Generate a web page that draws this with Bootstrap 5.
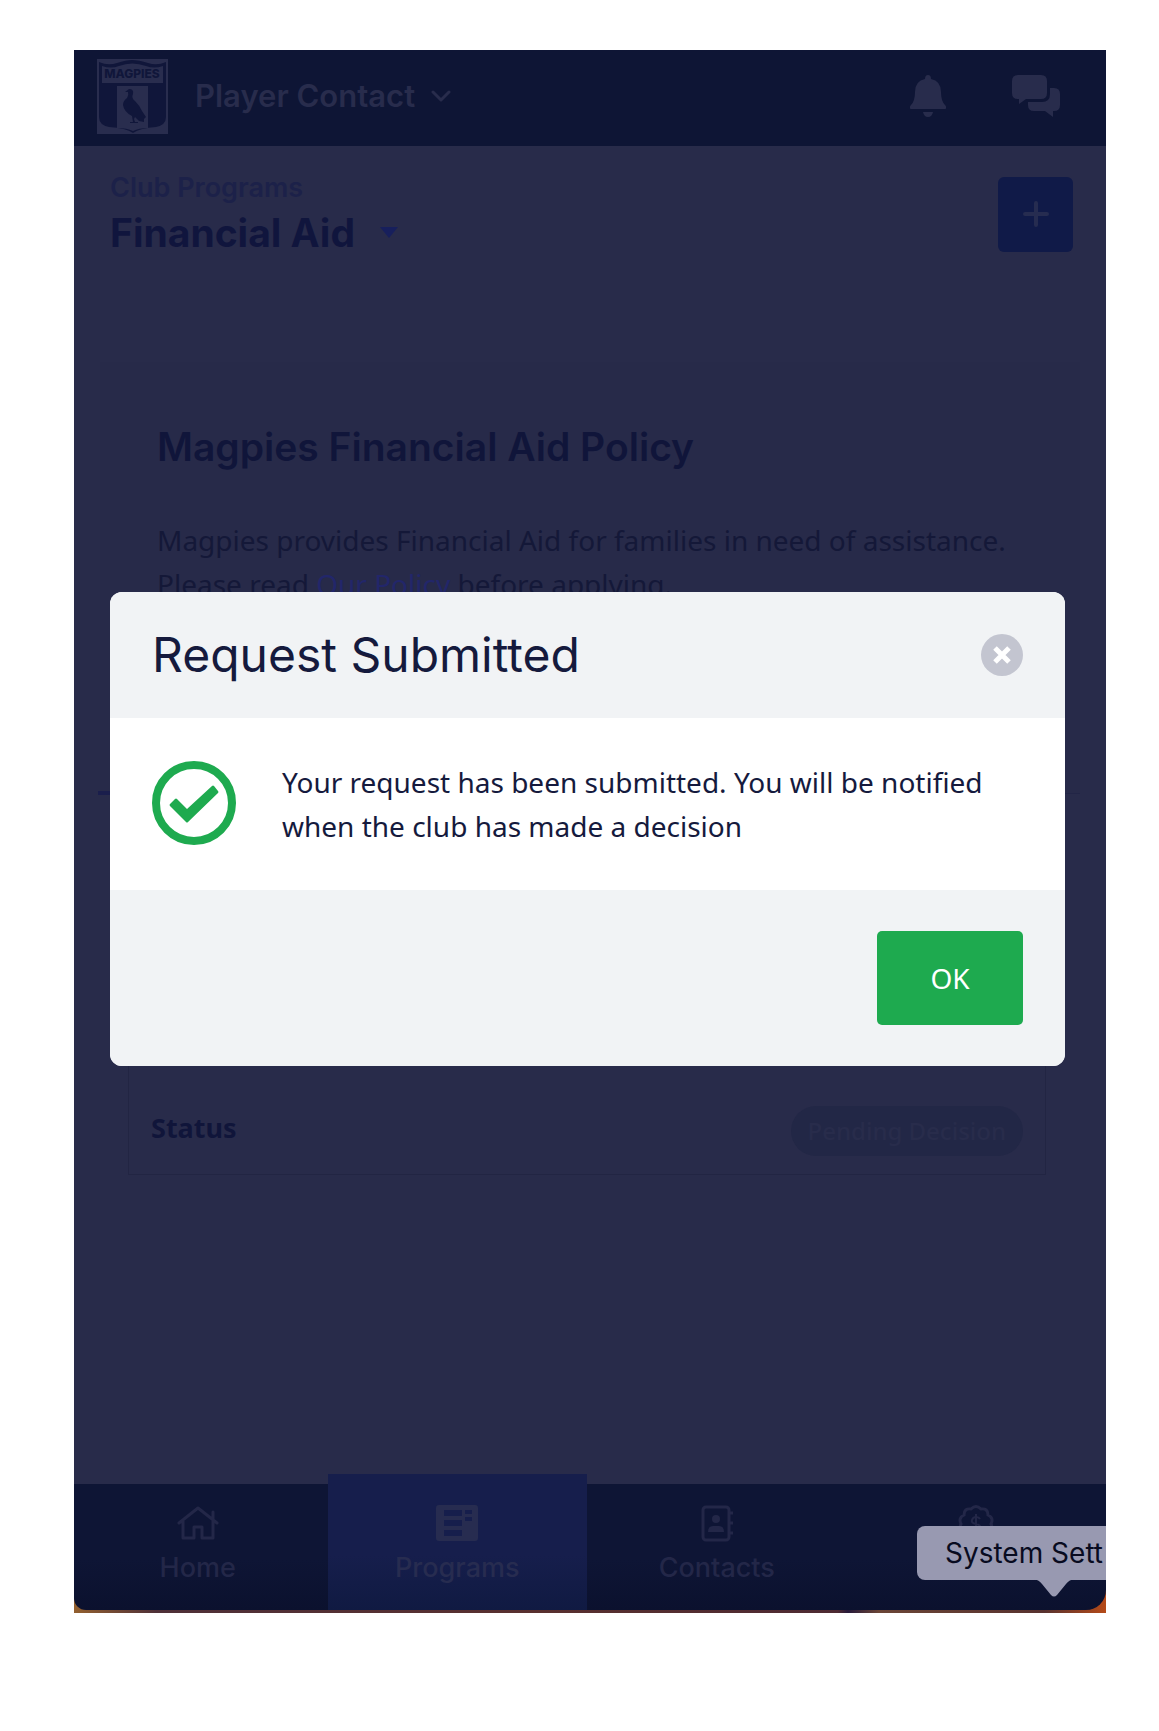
<!DOCTYPE html>
<html lang="en">
<head>
<meta charset="utf-8">
<meta name="viewport" content="width=device-width, initial-scale=1">
<title>Financial Aid</title>
<link href="https://cdn.jsdelivr.net/npm/bootstrap@5.3.0/dist/css/bootstrap.min.css" rel="stylesheet">
<style>
  body { background: #fff; font-family: "Noto Sans", sans-serif; font-size: 28px; line-height: 44px; color: #10153a; }
  .page-wrap { padding: 50px 53px 118px 74px; }
  .app-frame { min-height: calc(100vh - 168px); background: #282b4a; }
  .head-font { font-family: Inter, sans-serif; }
  .top-bar { height: 96px; background: #0e1535; padding: 0 46px 4px 23px; color: #282c4c; }
  .club-menu { font-size: 31px; font-weight: 600; color: #282c4c; margin-left: 27px; }
  .chat-btn { margin-left: 66px; }
  .sub-head { padding: 23px 33px 24px 36px; }
  .crumb { font-size: 27px; line-height: 38px; font-weight: 600; color: #1c2149; }
  .page-title { font-size: 39px; line-height: 52px; font-weight: 700; color: #10153d; }
  .add-btn { width: 75px; height: 75px; background: #101a48; border-radius: 6px; }
  .policy { margin: 79px 26px 0; padding: 59px 50px 0 57px; background: #272a49; min-height: 432px; border-bottom: 1px solid #222546; }
  .policy h2 { font-size: 39px; line-height: 52px; font-weight: 600; color: #10153a; margin-bottom: 45px; }
  .policy p { color: #141838; }
  .policy a { color: #22266a; }
  .tab-mark { width: 240px; height: 4px; background: #1a1e4c; margin-left: 24px; margin-top: -3px; }
  .request-box { margin: 120px 60px 0 54px; min-height: 260px; padding: 0 22px 18px; border: 1px solid #222543; }
  .request-box strong { font-size: 27px; line-height: 56px; }
  .status-pill { background: #222746; color: #282c4b; font-weight: 500; font-size: 24px; line-height: 50px; border-radius: 25px; padding: 0 17px; }
  .foot-wrap { background: linear-gradient(90deg, #93602f 0, #4f3038 8%, #59302f 45%, #4e2a32 74%, #27193a 75%, #6b4536 78%, #58322f 94%, #b54a18 100%); padding-bottom: 3px; }
  .foot-nav { background: linear-gradient(#0e1535 60%, #0b112e); border-bottom-left-radius: 12px; border-bottom-right-radius: 20px; }
  .foot-tabs { margin-left: -6px; }
  .foot-tab { height: 126px; padding-top: 20px; font-size: 27px; line-height: 32px; font-weight: 500; color: #232748; text-decoration: none; }
  .foot-tab svg { height: 38px; margin-bottom: 10px; }
  .foot-tab.active { margin-top: -10px; height: 136px; padding-top: 30px; background: linear-gradient(#161e4c 60%, #101a42); color: #272c50; }
  .dialog-box { position: absolute; top: 542px; left: 36px; right: 41px; border-radius: 12px; background: #fff; overflow: hidden; }
  .dialog-head { background: #f1f3f5; padding: 37px 42px; }
  .dialog-head h1 { font-size: 48px; line-height: 52px; font-weight: 400; color: #151a3d; }
  .dialog-main { padding: 42px; gap: 45px; color: #151a3d; }
  .dialog-foot { background: #f1f3f5; padding: 41px 42px; }
  .ok-btn { width: 146px; height: 94px; background: #1eaa4f; color: #fff; font-size: 28px; border-radius: 5px; }
  .dock-tip { position: absolute; left: 843px; right: 0; bottom: 33px; height: 54px; background: #9899b1; color: #080b20; border-radius: 8px 0 0 8px; padding-left: 28px; font-family: Inter, sans-serif; font-size: 28px; line-height: 54px; white-space: nowrap; }
  .dock-tip svg { position: absolute; left: 115px; top: 53px; }
</style>
<script src="https://cdn.jsdelivr.net/npm/bootstrap@5.3.0/dist/js/bootstrap.bundle.min.js"></script>
</head>
<body>
<div class="page-wrap">
<div class="app-frame position-relative d-flex flex-column overflow-hidden">
  <header class="top-bar d-flex align-items-center">
    <svg width="71" height="75" viewBox="0 0 71 75" role="img" aria-label="Magpies crest">
      <path fill="#292d4e" d="M0 0h71v75H0z"/>
      <path fill="#10163a" d="M2 3q9 4 18 1Q29 1 35 1q7 0 16 3 9 3 18-1v55q0 8-10 10-16 1-23 6-7-5-24-6Q2 66 2 58z"/>
      <path fill="#292d4e" d="M5 7q9 3 17 0 13-5 27 0 8 3 17 0v17H5zM20 27h31v42q-9 0-15 3-6-3-16-3z"/>
      <text x="35" y="19" text-anchor="middle" font-family="Inter, sans-serif" font-size="12" font-weight="800" fill="#10163a">MAGPIES</text>
      <path fill="#10163a" d="M28 33l4-3q5 0 4 5-2 4 2 7 5 5 7 10l4 6-2 2 0 3-5-1-4-4-1 2 1 3h3v1h-8v-1h3l-1-6q-8-4-9-11 0-4 4-7 2-3 1-6z"/>
    </svg>
    <button type="button" class="btn club-menu head-font border-0 p-0 d-flex align-items-center gap-3">Player Contact
      <svg width="20" height="12" viewBox="0 0 20 12" fill="none" stroke="currentColor" stroke-width="3" stroke-linecap="round" stroke-linejoin="round"><path d="M2 2l8 8 8-8"/></svg>
    </button>
    <button type="button" class="btn border-0 p-0 ms-auto lh-1" aria-label="Notifications">
      <svg width="36" height="42" viewBox="0 0 36 42" fill="#282c4c"><path d="M18 0q3 0 3 4 10 2 10 13 0 9 4 13 3 4-1 4H2q-4 0-1-4 4-4 4-13Q5 6 15 4q0-4 3-4zM13 37h10q-1 5-5 5t-5-5z"/></svg>
    </button>
    <button type="button" class="btn chat-btn border-0 p-0 lh-1" aria-label="Messages">
      <svg width="48" height="42" viewBox="0 0 48 42" fill="#282c4c"><path d="M6 0h23q6 0 6 6v12q0 6-6 6H14l-7 5v-5H6q-6 0-6-6V6q0-6 6-6zM38 13h4q6 0 6 6v11q0 6-6 6h-1v6l-8-6H22q-6 0-6-6v-3h14q8 0 8-8z"/></svg>
    </button>
  </header>
  <div class="sub-head head-font d-flex justify-content-between align-items-center">
    <div>
      <a href="#" class="crumb d-block text-decoration-none">Club Programs</a>
      <button type="button" class="btn page-title border-0 p-0 d-flex align-items-center gap-4">Financial Aid
        <svg width="20" height="12" viewBox="0 0 20 12" fill="#171f5c"><path d="M1 0h18L10 11z"/></svg>
      </button>
    </div>
    <button type="button" class="btn add-btn border-0 p-0 d-flex align-items-center justify-content-center" aria-label="Add">
      <svg width="26" height="26" viewBox="0 0 26 26" stroke="#262c50" stroke-width="4" stroke-linecap="round"><path d="M13 2v22M2 13h22"/></svg>
    </button>
  </div>
  <section class="policy">
    <h2 class="head-font">Magpies Financial Aid Policy</h2>
    <p class="mb-0">Magpies provides Financial Aid for families in need of assistance.<br>Please read <a href="#" class="text-decoration-none">Our Policy</a> before applying.</p>
  </section>
  <div class="tab-mark"></div>
  <div class="request-box d-flex justify-content-between align-items-end">
    <strong>Status</strong>
    <span class="status-pill">Pending Decision</span>
  </div>
  <div class="foot-wrap mt-auto">
    <nav class="foot-nav">
      <div class="foot-tabs head-font d-flex">
        <a href="#" class="foot-tab col-3 d-flex flex-column align-items-center">
          <svg width="42" viewBox="0 0 42 38" fill="none" stroke="currentColor" stroke-width="3" stroke-linejoin="round" stroke-linecap="round"><path d="M2 19L21 4l19 15M6 17v17h11V23h8v11h11V17M36 15V8"/></svg>Home</a>
        <a href="#" class="foot-tab active col-3 d-flex flex-column align-items-center" aria-current="page">
          <svg width="42" viewBox="0 0 42 38" fill="currentColor"><path fill-rule="evenodd" d="M3 1h36q3 0 3 3v30q0 3-3 3H3q-3 0-3-3V4q0-3 3-3zM8 6v6h18V6zM8 16v6h18v-6zM8 26v6h18v-6zM29 6v4h7V6zM29 13v4h7v-4z"/></svg>Programs</a>
        <a href="#" class="foot-tab col-3 d-flex flex-column align-items-center">
          <svg width="32" viewBox="0 0 32 38" fill="none" stroke="currentColor" stroke-width="3"><rect x="2" y="3" width="26" height="33" rx="3"/><path d="M28 9h4M28 19h4M28 29h4"/><circle cx="15" cy="15" r="4" fill="currentColor" stroke="none"/><path fill="currentColor" stroke="none" d="M7 28q0-6 5-6h6q5 0 5 6z"/></svg>Contacts</a>
        <a href="#" class="foot-tab col-3 d-flex flex-column align-items-center" aria-label="Payments">
          <svg width="36" viewBox="0 0 36 38" fill="none" stroke="currentColor" stroke-width="3"><path d="M13 5q5-5 10 0 7-1 7 6 6 3 3 9 3 6-3 9 0 7-7 6-5 5-10 0-7 1-7-6-6-3-3-9-3-6 3-9 0-7 7-6z"/><path d="M22 15q-1-2-4-2t-4 3 4 4 4 4-4 3-4-2M18 10v20" stroke-width="2"/></svg></a>
      </div>
    </nav>
  </div>
  <div class="dialog-box" role="dialog" aria-modal="true" aria-labelledby="dialogTitle">
    <div class="dialog-head d-flex align-items-center justify-content-between">
      <h1 id="dialogTitle" class="head-font mb-0">Request Submitted</h1>
      <button type="button" class="btn border-0 p-0 lh-1" aria-label="Close">
        <svg width="42" height="42" viewBox="0 0 42 42"><circle cx="21" cy="21" r="21" fill="#c3c5d0"/><path d="M14 14l14 14M28 14L14 28" stroke="#fff" stroke-width="5"/></svg>
      </button>
    </div>
    <div class="dialog-main d-flex">
      <svg class="flex-shrink-0" width="85" height="85" viewBox="0 0 85 85"><circle cx="42" cy="43" r="38" fill="none" stroke="#1eaa4f" stroke-width="8"/><path d="M18 46q-1-1 0-2l5-5q1-1 2 0l10 10 25-23q1-1 2 0l4 5q1 1 0 2L36 62q-1 1-2 0z" fill="#1eaa4f"/></svg>
      <p class="mb-0">Your request has been submitted. You will be notified<br>when the club has made a decision</p>
    </div>
    <div class="dialog-foot d-flex justify-content-end">
      <button type="button" class="btn ok-btn border-0">OK</button>
    </div>
  </div>
  <div class="dock-tip" role="tooltip">System Sett
    <svg width="44" height="18" viewBox="0 0 44 18" fill="#9899b1"><path d="M2 0h40q-5 1-8 5l-9 11q-3 3-6 0L10 5Q7 1 2 0z"/></svg>
  </div>
</div>
</div>
</body>
</html>
